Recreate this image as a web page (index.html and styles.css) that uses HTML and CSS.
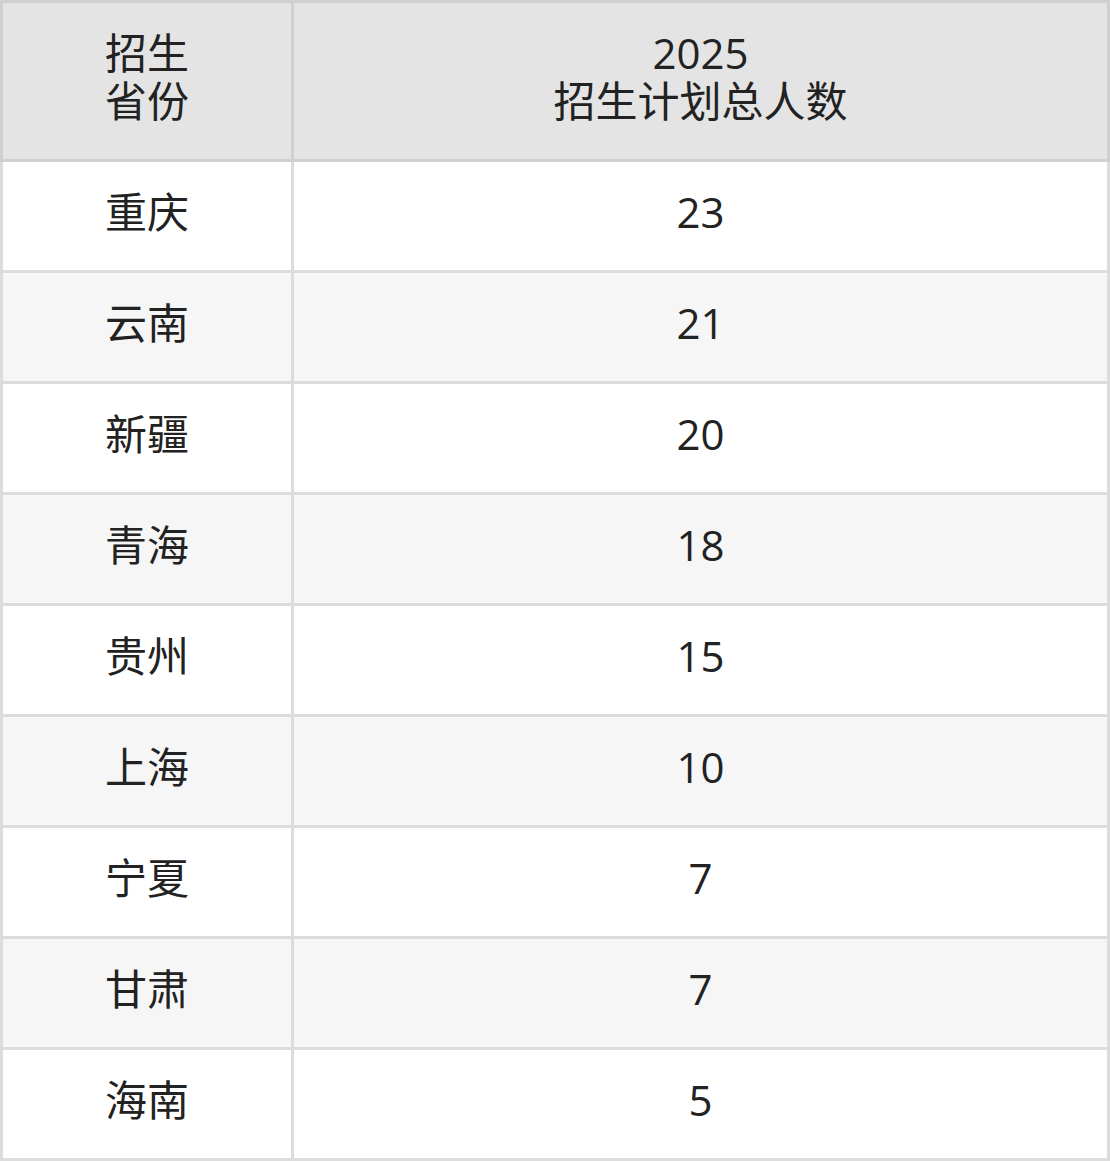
FILE: index.html
```html
<!DOCTYPE html>
<html lang="zh">
<head>
<meta charset="utf-8">
<link rel="stylesheet" href="styles.css">
</head>
<body>
<table class="plan">
  <thead>
    <tr>
      <th class="col-prov">招生<br>省份</th>
      <th class="col-num">2025<br>招生计划总人数</th>
    </tr>
  </thead>
  <tbody>
    <tr><td>重庆</td><td>23</td></tr>
    <tr><td>云南</td><td>21</td></tr>
    <tr><td>新疆</td><td>20</td></tr>
    <tr><td>青海</td><td>18</td></tr>
    <tr><td>贵州</td><td>15</td></tr>
    <tr><td>上海</td><td>10</td></tr>
    <tr><td>宁夏</td><td>7</td></tr>
    <tr><td>甘肃</td><td>7</td></tr>
    <tr><td>海南</td><td>5</td></tr>
  </tbody>
</table>
</body>
</html>
```
FILE: styles.css
```css
html, body {
  margin: 0;
  padding: 0;
  background: #ffffff;
}
.plan {
  width: 1110px;
  border-collapse: collapse;
  font-family: "Open Sans", "Noto Sans CJK SC", sans-serif;
  font-size: 42px;
  line-height: 48px;
  color: #222222;
}
.plan th,
.plan td {
  padding: 26px 0 34px;
  text-align: center;
  font-weight: normal;
}
.plan th {
  background: #e4e4e4;
  border: 3px solid #d0d0d0;
}
.plan td {
  border: 3px solid #dcdcdc;
}
.plan .col-prov {
  width: 288px;
}
.plan tbody tr:nth-child(even) td {
  background: #f6f6f6;
}
```
